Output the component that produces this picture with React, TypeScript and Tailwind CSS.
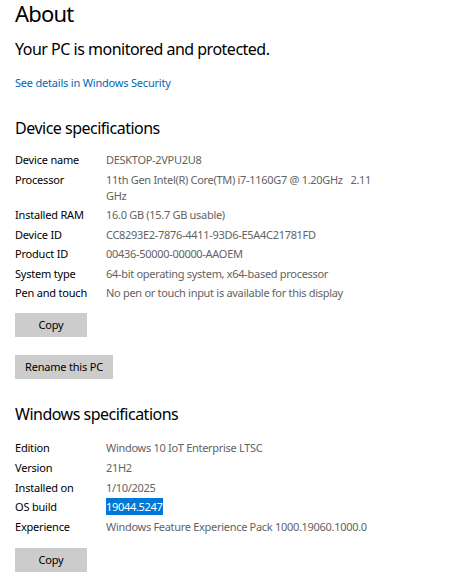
import React from "react";

const FONT = "font-['Noto_Sans','Open_Sans',sans-serif]";

const DEVICE = [
  { label: "Device name", value: "DESKTOP-2VPU2U8" },
  { label: "Processor", value: "11th Gen Intel(R) Core(TM) i7-1160G7 @ 1.20GHz   2.11\nGHz" },
  { label: "Installed RAM", value: "16.0 GB (15.7 GB usable)" },
  { label: "Device ID", value: "CC8293E2-7876-4411-93D6-E5A4C21781FD" },
  { label: "Product ID", value: "00436-50000-00000-AAOEM" },
  { label: "System type", value: "64-bit operating system, x64-based processor" },
  { label: "Pen and touch", value: "No pen or touch input is available for this display" },
];

const WINDOWS = [
  { label: "Edition", value: "Windows 10 IoT Enterprise LTSC" },
  { label: "Version", value: "21H2" },
  { label: "Installed on", value: "1/10/2025" },
  { label: "OS build", value: "19044.5247", selected: true },
  { label: "Experience", value: "Windows Feature Experience Pack 1000.19060.1000.0" },
];

type Row = { label: string; value: string; selected?: boolean };

function SpecTable({ rows }: { rows: Row[] }) {
  return (
    <div className="flex flex-col gap-[3.5px]">
      {rows.map((r) => (
        <div key={r.label} className="flex text-[11px] leading-[16px] tracking-[-0.2px]">
          <div className="w-[91px] shrink-0 text-black">{r.label}</div>
          <div className="whitespace-pre tracking-[-0.3px] text-[#636363]">
            {r.selected ? (
              <span className="bg-[#0078d7] py-[1px] text-white">{r.value}</span>
            ) : (
              r.value
            )}
          </div>
        </div>
      ))}
    </div>
  );
}

function GrayButton({ children, width }: { children: React.ReactNode; width: string }) {
  return (
    <button className={`${width} h-[24px] bg-[#cccccc] text-[11px] tracking-[-0.2px] text-black`}>
      {children}
    </button>
  );
}

export default function App() {
  return (
    <div className={`${FONT} h-[577px] w-[474px] overflow-hidden bg-white px-[15px]`}>
      <h1 className="text-[22px] leading-[26px] tracking-[-0.8px] text-black">About</h1>
      <p className="mt-[11px] text-[16px] leading-[24px] tracking-[-0.5px] text-black">
        Your PC is monitored and protected.
      </p>
      <a className="mt-[14px] block text-[11px] leading-[16px] tracking-[-0.2px] text-[#0067b8]">
        See details in Windows Security
      </a>

      <h2 className="mt-[25px] text-[16px] leading-[24px] tracking-[-0.5px] text-black">Device specifications</h2>
      <div className="mt-[12px]">
        <SpecTable rows={DEVICE} />
      </div>
      <div className="mt-[12px] flex flex-col items-start gap-[18px]">
        <GrayButton width="w-[72px]">Copy</GrayButton>
        <GrayButton width="w-[98px]">Rename this PC</GrayButton>
      </div>

      <h2 className="mt-[23px] text-[16px] leading-[24px] tracking-[-0.5px] text-black">Windows specifications</h2>
      <div className="mt-[14px] [&>div]:gap-[3.75px]">
        <SpecTable rows={WINDOWS} />
      </div>
      <div className="mt-[11px]">
        <GrayButton width="w-[72px]">Copy</GrayButton>
      </div>
    </div>
  );
}
